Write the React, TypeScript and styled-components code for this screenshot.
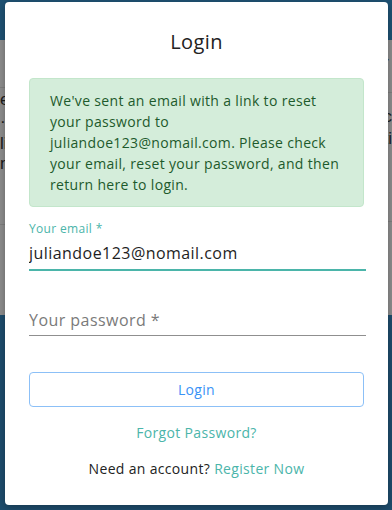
import React from "react";
import styled, { createGlobalStyle } from "styled-components";

const Global = createGlobalStyle`
  html, body { margin: 0; padding: 0; }
  body {
    width: 392px;
    height: 510px;
    overflow: hidden;
    font-family: "Open Sans", "Noto Sans", sans-serif;
    background: #1f4f70;
  }
  * { box-sizing: border-box; }
`;

/* ---------- page behind the dialog ---------- */
const Page = styled.div`
  position: relative;
  width: 392px;
  height: 510px;
  display: flex;
  flex-direction: column;
`;

const HeaderBand = styled.div`
  height: 40px;
  background: #1f5274;
`;

const DimPanel = styled.div`
  height: 275px;
  background: #8e8e8e;
  display: flex;
  justify-content: space-between;
  font-family: "Liberation Sans", sans-serif;
  color: #1c1c1c;
`;

const PanelColumn = styled.div<{ $align: "left" | "right" }>`
  width: 60px;
  display: flex;
  flex-direction: column;
  align-items: ${p => (p.$align === "left" ? "flex-start" : "flex-end")};
  font-size: 17px;
  line-height: 20px;
`;

const Hair = styled.div<{ $top: number }>`
  margin-top: ${p => p.$top}px;
  height: 1px;
  width: 100%;
  background: #7f7f7f;
`;

const Glyph = styled.span<{ $top: number }>`
  margin-top: ${p => p.$top}px;
  white-space: nowrap;
`;

const BottomBand = styled.div`
  flex: 1;
  background: #1e4d6d;
`;

/* ---------- dialog ---------- */
const Dialog = styled.div`
  position: absolute;
  left: 5px;
  top: 2px;
  width: 383px;
  height: 503px;
  background: #ffffff;
  border-radius: 4px;
  box-shadow: 0 2px 8px rgba(0, 0, 0, 0.3);
  padding: 25px 24px 0 24px;
  display: flex;
  flex-direction: column;
  letter-spacing: 0.33px;
`;

const Title = styled.h2`
  margin: 0;
  font-size: 20px;
  line-height: 30px;
  font-weight: 400;
  color: #222222;
  text-align: center;
  letter-spacing: 0.4px;
`;

const Alert = styled.div`
  margin-top: 21px;
  background: #d4edda;
  border: 1px solid #c3e6cb;
  border-radius: 4px;
  padding: 11px 18px 11px 20px;
  color: #1d5a2c;
  font-size: 14px;
  line-height: 21px;
`;

const Field = styled.div<{ $gap: number }>`
  margin-top: ${p => p.$gap}px;
  display: flex;
  flex-direction: column;
  margin-right: -2px;
`;

const Label = styled.label`
  height: 16px;
  font-size: 12px;
  line-height: 16px;
  color: #4bb5aa;
`;

const Input = styled.input<{ $focused?: boolean }>`
  margin-top: 3px;
  border: none;
  border-bottom: ${p => (p.$focused ? "2px solid #4bb5aa" : "1px solid #8f8f8f")};
  padding: 0 0 ${p => (p.$focused ? 4 : 3)}px 0;
  height: ${p => (p.$focused ? 31 : 28)}px;
  font-family: inherit;
  font-size: 16px;
  line-height: 24px;
  letter-spacing: 0.45px;
  color: #1e1e1e;
  background: transparent;
  outline: none;
  &::placeholder {
    color: #7a7a7a;
    opacity: 1;
  }
`;

const Button = styled.button`
  margin-top: 36px;
  height: 35px;
  width: 100%;
  background: #ffffff;
  border: 1px solid #8cc0f7;
  border-radius: 4px;
  color: #3a92f6;
  font-family: inherit;
  font-size: 14px;
  letter-spacing: 0.33px;
  cursor: pointer;
`;

const CenterLine = styled.div<{ $gap: number }>`
  margin-top: ${p => p.$gap}px;
  text-align: center;
  font-size: 14px;
  line-height: 20px;
  color: #222222;
`;

const Link = styled.a`
  color: #4bb5aa;
  text-decoration: none;
`;

export default function App() {
  return (
    <>
      <Global />
      <Page>
        <HeaderBand />
        <DimPanel>
          <PanelColumn $align="left">
            <Hair $top={47} />
            <Glyph $top={2}>er</Glyph>
            <Glyph $top={2}>· t</Glyph>
            <Glyph $top={2}>li</Glyph>
            <Glyph $top={0}>nl</Glyph>
            <Hair $top={50} />
          </PanelColumn>
          <PanelColumn $align="right">
            <Glyph $top={14}>⌃</Glyph>
            <Hair $top={18} />
            <Glyph $top={14}>ac</Glyph>
            <Glyph $top={2}>ti</Glyph>
            <Hair $top={72} />
          </PanelColumn>
        </DimPanel>
        <BottomBand />

        <Dialog role="dialog">
          <Title>Login</Title>
          <Alert>
            We've sent an email with a link to reset your password to juliandoe123@nomail.com. Please check
            your email, reset your password, and then return here to login.
          </Alert>
          <Field $gap={14}>
            <Label>Your email *</Label>
            <Input $focused type="email" defaultValue="juliandoe123@nomail.com" />
          </Field>
          <Field $gap={18}>
            <Label />
            <Input type="password" placeholder="Your password *" />
          </Field>
          <Button>Login</Button>
          <CenterLine $gap={16}>
            <Link href="#">Forgot Password?</Link>
          </CenterLine>
          <CenterLine $gap={16}>
            Need an account? <Link href="#">Register Now</Link>
          </CenterLine>
        </Dialog>
      </Page>
    </>
  );
}
